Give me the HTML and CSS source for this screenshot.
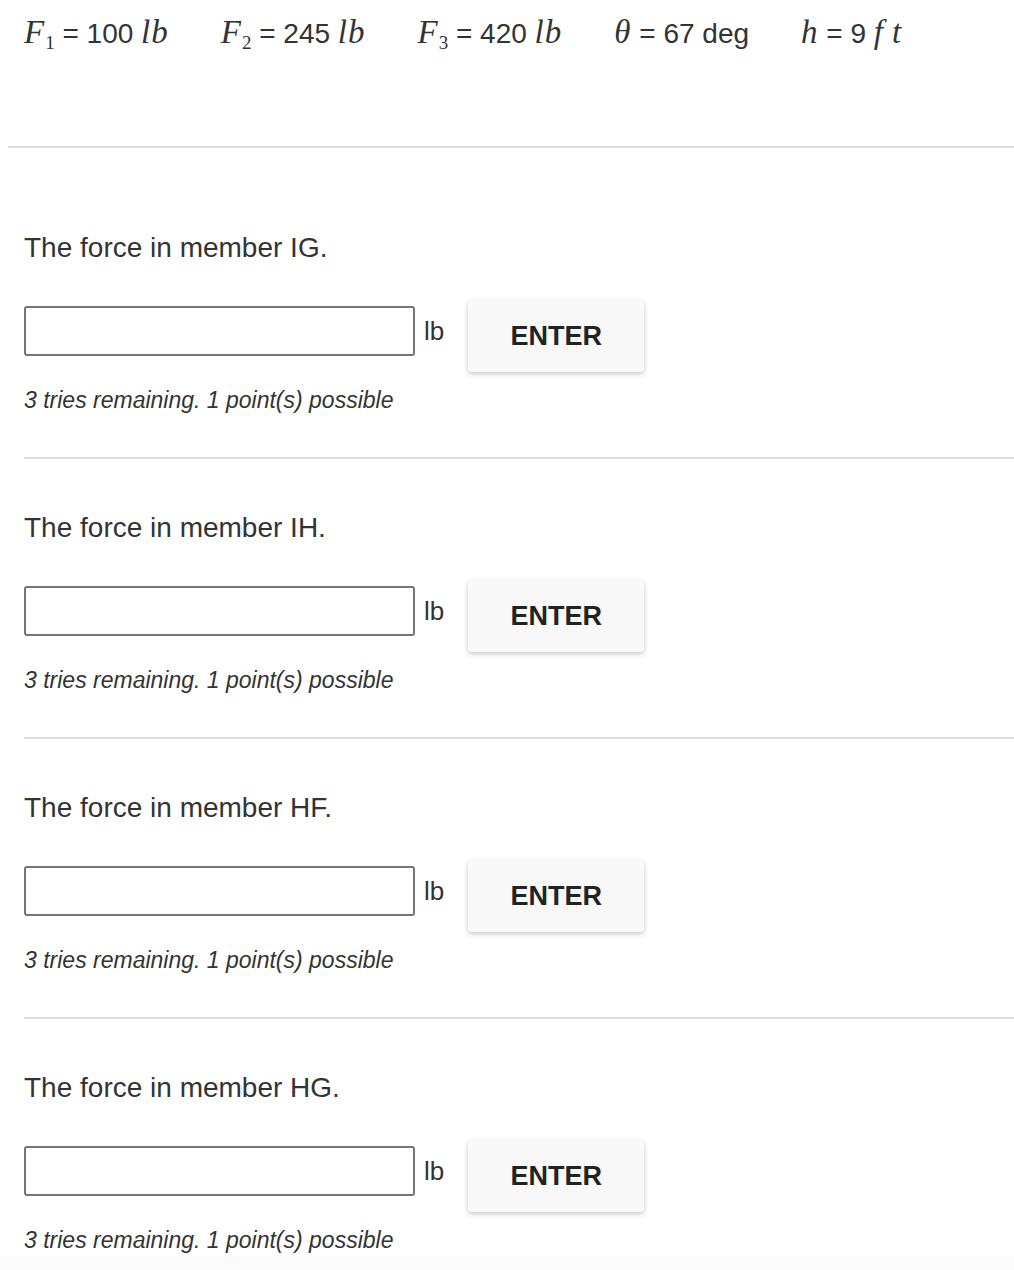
FILE: index.html
```html
<!DOCTYPE html>
<html>
<head>
<meta charset="utf-8">
<link rel="stylesheet" href="styles.css">
</head>
<body>
<div class="vars">
  <span class="v"><i class="m">F</i><sub>1</sub> = 100 <i class="m">lb</i></span>
  <span class="v"><i class="m">F</i><sub>2</sub> = 245 <i class="m">lb</i></span>
  <span class="v"><i class="m">F</i><sub>3</sub> = 420 <i class="m">lb</i></span>
  <span class="v"><i class="m">θ</i> = 67 deg</span>
  <span class="v"><i class="m">h</i> = 9 <i class="m sp">ft</i></span>
</div>
<div class="topsep"></div>
<div class="questions">
  <div class="q first">
    <p class="qt">The force in member IG.</p>
    <div class="row"><div class="inp"></div><span class="unit">lb</span><button class="btn">ENTER</button></div>
    <p class="tries">3 tries remaining. 1 point(s) possible</p>
  </div>
  <div class="q">
    <p class="qt">The force in member IH.</p>
    <div class="row"><div class="inp"></div><span class="unit">lb</span><button class="btn">ENTER</button></div>
    <p class="tries">3 tries remaining. 1 point(s) possible</p>
  </div>
  <div class="q">
    <p class="qt">The force in member HF.</p>
    <div class="row"><div class="inp"></div><span class="unit">lb</span><button class="btn">ENTER</button></div>
    <p class="tries">3 tries remaining. 1 point(s) possible</p>
  </div>
  <div class="q last">
    <p class="qt">The force in member HG.</p>
    <div class="row"><div class="inp"></div><span class="unit">lb</span><button class="btn">ENTER</button></div>
    <p class="tries">3 tries remaining. 1 point(s) possible</p>
  </div>
</div>
<div class="foot"></div>
</body>
</html>
```

FILE: styles.css
```css
html, body {
  margin: 0;
  padding: 0;
  background: #ffffff;
}
body {
  font-family: "Liberation Sans", Arial, sans-serif;
  color: #333333;
  overflow: hidden;
}
.vars {
  display: flex;
  gap: 52px;
  padding: 12px 0 0 24px;
  height: 146px;
  box-sizing: border-box;
  font-size: 28px;
  line-height: 40px;
  white-space: nowrap;
}
.m {
  font-family: "Liberation Serif", "Times New Roman", serif;
  font-style: italic;
  font-size: 33px;
  letter-spacing: 1px;
}
.m.sp {
  letter-spacing: 9px;
}
.vars sub {
  font-size: 19px;
  line-height: 0;
  vertical-align: -6px;
  font-family: "Liberation Serif", serif;
}
.topsep {
  margin-left: 8px;
  height: 2px;
  background: #dddddd;
}
.q {
  padding: 49px 0 41px 0;
  border-bottom: 2px solid #dddddd;
  margin-left: 24px;
}
.q.first {
  padding-top: 80px;
}
.q.last {
  border-bottom: none;
  padding-bottom: 0;
}
.qt {
  margin: 0;
  font-size: 28px;
  line-height: 40px;
}
.row {
  display: flex;
  align-items: flex-start;
  margin-top: 32px;
  height: 72px;
}
.inp {
  margin-top: 6px;
  width: 391px;
  height: 50px;
  box-sizing: border-box;
  border: 2px solid #767676;
  border-radius: 3px;
  background: #fff;
}
.unit {
  margin-left: 9px;
  margin-top: 14px;
  font-size: 26px;
  line-height: 34px;
}
.btn {
  margin-left: 24px;
  width: 176px;
  height: 72px;
  border: none;
  border-radius: 3px;
  background: #f8f8f8;
  box-shadow: 0 2px 5px rgba(0, 0, 0, 0.22);
  font-family: "Liberation Sans", Arial, sans-serif;
  font-size: 27px;
  font-weight: 700;
  color: #222;
  padding: 0;
}
.tries {
  margin: 12px 0 0 0;
  font-size: 23px;
  line-height: 32px;
  font-style: italic;
}
.foot {
  height: 40px;
  background: #fbfbfb;
}
```
